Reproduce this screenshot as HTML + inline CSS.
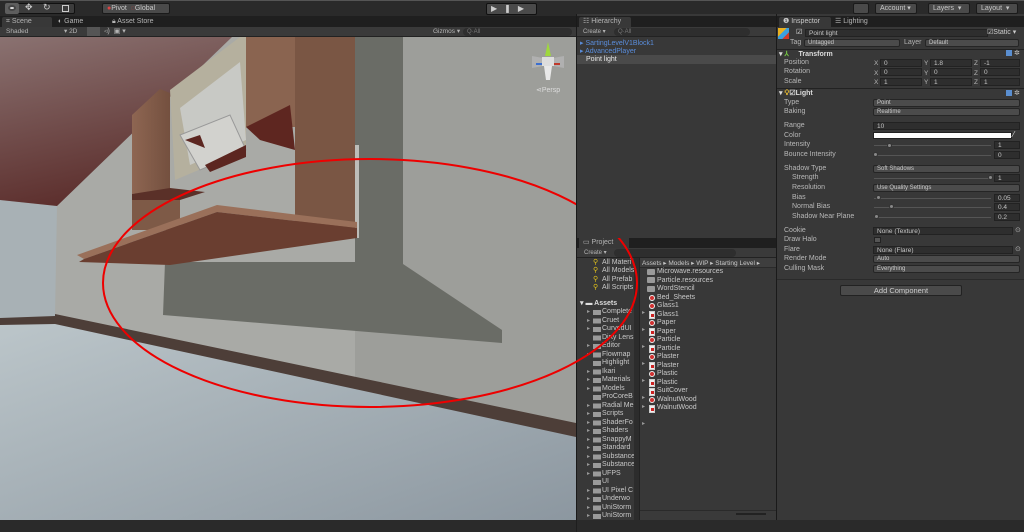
<!DOCTYPE html>
<html><head><meta charset="utf-8"><style>
*{margin:0;padding:0;box-sizing:border-box}
body{width:1024px;height:532px;overflow:hidden;background:#1e1e1e;font-family:"Liberation Sans",sans-serif;font-size:7px;color:#b4b4b4;position:relative}
.a{position:absolute;white-space:nowrap}
svg.a{display:block}
.btn{position:absolute;background:#4a4a4a;border:1px solid #1a1a1a;border-radius:2px;color:#c8c8c8;font-size:7px;line-height:8px;padding-left:4px}
.fld{position:absolute;background:#2e2e2e;border:1px solid #222;height:8px;color:#c4c4c4;font-size:6.5px;line-height:7px;padding-left:3px}
.dd{position:absolute;background:#4b4b4b;border:1px solid #252525;border-radius:2px;height:8px;color:#c8c8c8;font-size:6px;line-height:7px;padding-left:3px}
.lbl{position:absolute;left:784px;color:#b8b8b8;font-size:7px}
.sl{position:absolute;height:1px;background:#222;border-bottom:1px solid #555}
.kn{position:absolute;width:5px;height:5px;border-radius:50%;background:#888;border:1px solid #333}
.fo{position:absolute;width:8px;height:6px;background:#9a9a9a;border-radius:1px}
.mat{position:absolute;width:6px;height:6px;border-radius:50%;background:#d03030;border:1px solid #eee}
.pf{position:absolute;width:6px;height:8px;background:#eee;border:1px solid #ccc}
.pf:after{content:"";position:absolute;left:1px;top:2px;width:3px;height:3px;background:#c22}
</style></head><body>

<!-- top toolbar -->
<div class="a" style="left:0;top:0;width:1024px;height:16px;background:#2a2a2a;border-top:1px solid #555"></div>
<div class="a" style="left:5px;top:3px;width:70px;height:11px;background:#3c3c3c;border:1px solid #111;border-radius:2px"></div>
<div class="a" style="left:5px;top:3px;width:14px;height:11px;background:#5e5e5e;border-radius:2px"></div>
<div class="a" style="left:8px;top:5px;width:8px;height:6px;border-radius:50%;background:#ddd;border:2px solid #444"></div>
<div class="a" style="left:25px;top:2px;color:#ccc;font-size:9px">✥</div>
<div class="a" style="left:43px;top:2px;color:#ccc;font-size:9px">↻</div>
<div class="a" style="left:62px;top:5px;width:7px;height:7px;border:1px solid #ccc"></div>
<div class="btn" style="left:102px;top:3px;width:68px;height:11px;line-height:9px"><span style="color:#d44">●</span>Pivot &nbsp;<span style="color:#d44">◌</span>Global</div>
<div class="a" style="left:486px;top:3px;width:51px;height:12px;background:#4a4a4a;border:1px solid #111;border-radius:2px;color:#ccc;font-size:8px;line-height:10px;letter-spacing:7px;padding-left:4px">▶❚▶</div>
<div class="btn" style="left:853px;top:3px;width:16px;height:11px"></div>
<div class="btn" style="left:875px;top:3px;width:42px;height:11px;line-height:9px">Account ▾</div>
<div class="btn" style="left:928px;top:3px;width:42px;height:11px;line-height:9px">Layers &nbsp;▾</div>
<div class="btn" style="left:976px;top:3px;width:42px;height:11px;line-height:9px">Layout &nbsp;▾</div>

<!-- scene tabs -->
<div class="a" style="left:0;top:16px;width:576px;height:11px;background:#1f1f1f"></div>
<div class="a" style="left:2px;top:17px;width:50px;height:10px;background:#383838;border-radius:2px 2px 0 0;padding-left:4px;line-height:10px">⌗ Scene</div>
<div class="a" style="left:58px;top:17px;line-height:10px">◐ Game</div>
<div class="a" style="left:112px;top:17px;line-height:10px">🔒︎ Asset Store</div>
<div class="a" style="left:0;top:27px;width:576px;height:10px;background:#3a3a3a;border-bottom:1px solid #222"></div>
<div class="a" style="left:6px;top:28px;font-size:6.5px;line-height:8px">Shaded</div>
<div class="a" style="left:64px;top:28px;font-size:6.5px;line-height:8px">▾ 2D</div>
<div class="a" style="left:87px;top:27px;width:13px;height:9px;background:#555"></div>
<div class="a" style="left:104px;top:27px;font-size:7px;line-height:9px">◃) &nbsp;▣ ▾</div>
<div class="a" style="left:433px;top:28px;font-size:6.5px;line-height:8px">Gizmos ▾</div>
<div class="a" style="left:463px;top:28px;width:109px;height:8px;background:#2e2e2e;border-radius:4px;font-size:6px;line-height:8px;padding-left:4px;color:#777">Q·All</div>

<!-- scene view -->
<svg class="a" style="left:0;top:37px" width="576" height="483" viewBox="0 0 576 483" preserveAspectRatio="none">
<defs>
<linearGradient id="fl" x1="0" y1="0" x2="1" y2="1"><stop offset="0" stop-color="#bcc6ca"/><stop offset="1" stop-color="#8c97a0"/></linearGradient>
<linearGradient id="ce" x1="0" y1="0" x2="0.3" y2="1"><stop offset="0" stop-color="#8a7271"/><stop offset="1" stop-color="#5c2e2c"/></linearGradient>
<linearGradient id="wd" x1="0" y1="0" x2="1" y2="0"><stop offset="0" stop-color="#8e6652"/><stop offset="1" stop-color="#74503f"/></linearGradient>
</defs>
<g transform="translate(0,-37)">
<rect x="0" y="37" width="576" height="483" fill="#9d9e9a"/>
<polygon points="55,205 230,37 355,37 355,390 55,316" fill="#a9aaa6"/>
<polygon points="0,320 55,318 576,428 576,520 0,520" fill="url(#fl)"/>
<polygon points="0,316 55,314 576,423 576,437 55,324 0,325" fill="#4d3e38"/>
<polygon points="0,200 57,206 55,316 0,318" fill="#a8b1b5"/>
<polygon points="0,37 232,37 57,206 0,200" fill="url(#ce)"/>
<polygon points="355,37 403,37 403,264 502,330 502,343 163,315 165,262 355,262" fill="#6a6c66"/>
<!-- frame box -->
<polygon points="170,90 240,37 246,37 246,150 175,180" fill="#b5b09e"/>
<polygon points="180,108 240,62 246,140 190,165" fill="#c8c9c5"/>
<polygon points="180,135 230,115 246,150 200,170" fill="#d2d2ce" stroke="#999" stroke-width="1"/>
<polygon points="185,140 200,135 205,148" fill="#5c2620"/>
<polygon points="205,165 246,145 246,157 210,172" fill="#5c2620"/>
<!-- left cabinet -->
<polygon points="132,115 160,89 170,93 170,190 132,194" fill="url(#wd)"/>
<polygon points="132,194 170,188 205,192 180,200 132,200" fill="#5a3028"/>
<rect x="132" y="200" width="48" height="30" fill="#7e5a47"/>
<!-- right cabinet -->
<rect x="246" y="37" width="49" height="90" fill="#8a6450"/>
<polygon points="246,127 290,105 295,150 260,140" fill="#5e2620"/>
<rect x="295" y="37" width="60" height="200" fill="#7a5644"/>
<rect x="355" y="145" width="4" height="93" fill="#bdbdb9"/>
<!-- shelf -->
<polygon points="77,255 217,205 357,222 357,228 217,212 84,259" fill="#9a705a"/>
<polygon points="84,259 217,212 357,228 357,238 170,265 79,262" fill="#6a3e30"/>
<!-- gizmo -->
<polygon points="545,56 551,56 548,42" fill="#9fd83c"/>
<polygon points="544,66 552,66 550,80 546,80" fill="#e8e8e8"/>
<polygon points="543,58 543,66 532,68 532,56" fill="#b0b0b0"/>
<polygon points="553,58 553,66 564,68 564,56" fill="#b0b0b0"/>
<rect x="542" y="57" width="12" height="9" fill="#ddd"/>
<rect x="536" y="63" width="6" height="2" fill="#3b6fd0"/>
<rect x="554" y="63" width="6" height="2" fill="#c0392b"/>
<text x="536" y="92" font-family="Liberation Sans" font-size="7" fill="#ddd">⋖Persp</text>
</g>
</svg>
<div class="a" style="left:0;top:520px;width:576px;height:12px;background:#2a2a2a"></div>

<!-- hierarchy -->
<div class="a" style="left:577px;top:14px;width:199px;height:224px;background:#383838"></div>
<div class="a" style="left:577px;top:16px;width:199px;height:11px;background:#1f1f1f"></div>
<div class="a" style="left:579px;top:17px;width:52px;height:10px;background:#383838;border-radius:2px 2px 0 0;padding-left:4px;line-height:10px">☷ Hierarchy</div>
<div class="a" style="left:577px;top:27px;width:199px;height:10px;background:#3a3a3a;border-bottom:1px solid #222"></div>
<div class="a" style="left:583px;top:28px;font-size:6px;line-height:8px">Create ▾</div>
<div class="a" style="left:614px;top:28px;width:136px;height:8px;background:#2e2e2e;border-radius:4px;font-size:6px;line-height:8px;padding-left:4px;color:#777">Q·All</div>
<div class="a" style="left:580px;top:39px;color:#5a8ddb;font-size:7px">▸ SartingLevelV1Block1</div>
<div class="a" style="left:580px;top:47px;color:#5a8ddb;font-size:7px">▸ AdvancedPlayer</div>
<div class="a" style="left:577px;top:55px;width:199px;height:9px;background:#4a4a4a"></div>
<div class="a" style="left:586px;top:56px;color:#e6e6e6;font-size:7px">Point light</div>

<!-- project -->
<div class="a" style="left:577px;top:238px;width:199px;height:282px;background:#383838"></div>
<div class="a" style="left:577px;top:238px;width:199px;height:10px;background:#1f1f1f"></div>
<div class="a" style="left:579px;top:238px;width:50px;height:10px;background:#383838;padding-left:4px;line-height:10px">▭ Project</div>
<div class="a" style="left:577px;top:248px;width:199px;height:10px;background:#3a3a3a;border-bottom:1px solid #222"></div>
<div class="a" style="left:584px;top:249px;font-size:6px;line-height:8px">Create ▾</div>
<div class="a" style="left:614px;top:249px;width:122px;height:8px;background:#2e2e2e;border-radius:4px"></div>
<div class="a" style="left:639px;top:258px;width:1px;height:262px;background:#222"></div>
<div class="a" style="left:634px;top:258px;width:5px;height:262px;background:#2c2c2c"></div>
<div class="a" style="left:640px;top:258px;width:136px;height:10px;background:#3e3e3e;border-bottom:1px solid #2a2a2a"></div>
<div class="a" style="left:642px;top:259px;color:#c8c8c8;font-size:6.5px">Assets ▸ Models ▸ WIP ▸ Starting Level ▸</div>
<div class="a" style="left:640px;top:510px;width:136px;height:10px;background:#3a3a3a;border-top:1px solid #2a2a2a"></div>
<div class="a" style="left:736px;top:513px;width:30px;height:2px;background:#222"></div>

<div class="a" style="left:593px;top:259px;color:#e4c41a;font-size:7px;line-height:8.3px">⚲<br>⚲<br>⚲<br>⚲</div>
<div class="a" style="left:602px;top:259px;color:#c8c8c8;font-size:7px;line-height:8.3px">All Materi<br>All Models<br>All Prefab<br>All Scripts</div>
<div class="a" style="left:580px;top:299px;color:#ddd;font-size:7px;font-weight:bold">▾ ▬ Assets</div>
<div class="a" style="left:587px;top:308px;color:#999;font-size:6px;line-height:8.5px">▸<br>▸<br>▸<br>&nbsp;<br>▸<br>▸<br>&nbsp;<br>▸<br>▸<br>▸<br>&nbsp;<br>▸<br>▸<br>▸<br>▸<br>▸<br>▸<br>▸<br>▸<br>▸<br>&nbsp;<br>▸<br>▸<br>▸<br>▸</div>
<div class="a" style="left:593px;top:310px;width:8px;height:210px;background:repeating-linear-gradient(#9a9a9a 0 5px,transparent 5px 8.5px)"></div>
<div class="a" style="left:602px;top:308px;color:#c8c8c8;font-size:7px;line-height:8.5px;width:32px;overflow:hidden;height:212px">Complete<br>Cruet<br>CurvedUI<br>Dirty Lens<br>Editor<br>Flowmap<br>Highlight<br>Ikari<br>Materials<br>Models<br>ProCoreB<br>Radial Me<br>Scripts<br>ShaderFo<br>Shaders<br>SnappyM<br>Standard<br>Substance<br>Substance<br>UFPS<br>UI<br>UI Pixel C<br>Underwo<br>UniStorm<br>UniStorm</div>

<div class="fo" style="left:647px;top:269px"></div><div class="fo" style="left:647px;top:277px"></div><div class="fo" style="left:647px;top:286px"></div>
<div class="mat" style="left:649px;top:295px"></div><div class="mat" style="left:649px;top:303px"></div>
<div class="pf" style="left:649px;top:311px"></div><div class="mat" style="left:649px;top:320px"></div>
<div class="pf" style="left:649px;top:328px"></div><div class="mat" style="left:649px;top:337px"></div>
<div class="pf" style="left:649px;top:345px"></div><div class="mat" style="left:649px;top:354px"></div>
<div class="pf" style="left:649px;top:362px"></div><div class="mat" style="left:649px;top:371px"></div>
<div class="pf" style="left:649px;top:379px"></div><div class="pf" style="left:649px;top:388px"></div>
<div class="mat" style="left:649px;top:397px"></div><div class="pf" style="left:649px;top:405px"></div>
<div class="a" style="left:642px;top:309px;color:#999;font-size:6px;line-height:8.5px">▸<br>&nbsp;<br>▸<br>&nbsp;<br>▸<br>&nbsp;<br>▸<br>&nbsp;<br>▸<br>&nbsp;<br>▸<br>▸<br>&nbsp;<br>▸</div>
<div class="a" style="left:657px;top:268px;color:#c8c8c8;font-size:7px;line-height:8.5px">Microwave.resources<br>Particle.resources<br>WordStencil<br>Bed_Sheets<br>Glass1<br>Glass1<br>Paper<br>Paper<br>Particle<br>Particle<br>Plaster<br>Plaster<br>Plastic<br>Plastic<br>SuitCover<br>WalnutWood<br>WalnutWood</div>

<!-- inspector -->
<div class="a" style="left:777px;top:14px;width:247px;height:506px;background:#383838"></div>
<div class="a" style="left:777px;top:16px;width:247px;height:11px;background:#1f1f1f"></div>
<div class="a" style="left:779px;top:17px;width:52px;height:10px;background:#383838;border-radius:2px 2px 0 0;padding-left:4px;line-height:10px;color:#c8c8c8">❶ Inspector</div>
<div class="a" style="left:835px;top:17px;line-height:10px">☰ Lighting</div>
<div class="a" style="left:778px;top:28px;width:11px;height:11px;background:linear-gradient(135deg,#e8b020 0 40%,#3aa0e0 40% 70%,#d03a2a 70%)"></div>
<div class="a" style="left:796px;top:28px;color:#ddd;font-size:7px">☑</div>
<div class="fld" style="left:805px;top:29px;width:183px">Point light</div>
<div class="a" style="left:987px;top:28px;color:#ccc;font-size:7px">☑Static ▾</div>
<div class="a" style="left:790px;top:39px;font-size:7px">Tag</div>
<div class="dd" style="left:804px;top:39px;width:96px">Untagged</div>
<div class="a" style="left:904px;top:39px;font-size:7px">Layer</div>
<div class="dd" style="left:925px;top:39px;width:94px">Default</div>
<div class="a" style="left:777px;top:49px;width:247px;height:1px;background:#222"></div>
<div class="a" style="left:779px;top:50px;color:#ddd;font-size:7px;font-weight:bold">▾ <span style="color:#7c4">⅄</span> &nbsp;&nbsp;&nbsp;&nbsp;Transform</div>
<div class="a" style="left:1006px;top:50px;width:6px;height:6px;background:#5a8ed0"></div>
<div class="a" style="left:1014px;top:49px;color:#ccc;font-size:7px">✲</div>
<div class="lbl" style="top:59px">Position</div><div class="lbl" style="top:68px">Rotation</div><div class="lbl" style="top:78px">Scale</div>
<div class="a" style="left:874px;top:59px;font-size:6.5px;line-height:9.6px">X<br>X<br>X</div>
<div class="a" style="left:924px;top:59px;font-size:6.5px;line-height:9.6px">Y<br>Y<br>Y</div>
<div class="a" style="left:974px;top:59px;font-size:6.5px;line-height:9.6px">Z<br>Z<br>Z</div>
<div class="fld" style="left:880px;top:59px;width:42px">0</div><div class="fld" style="left:930px;top:59px;width:42px">1.8</div><div class="fld" style="left:980px;top:59px;width:40px">-1</div>
<div class="fld" style="left:880px;top:68px;width:42px">0</div><div class="fld" style="left:930px;top:68px;width:42px">0</div><div class="fld" style="left:980px;top:68px;width:40px">0</div>
<div class="fld" style="left:880px;top:78px;width:42px">1</div><div class="fld" style="left:930px;top:78px;width:42px">1</div><div class="fld" style="left:980px;top:78px;width:40px">1</div>
<div class="a" style="left:777px;top:88px;width:247px;height:1px;background:#222"></div>
<div class="a" style="left:779px;top:89px;color:#ddd;font-size:7px;font-weight:bold">▾ <span style="color:#f0c030">💡︎</span>☑Light</div>
<div class="a" style="left:1006px;top:90px;width:6px;height:6px;background:#5a8ed0"></div>
<div class="a" style="left:1014px;top:89px;color:#ccc;font-size:7px">✲</div>
<div class="lbl" style="top:99px">Type</div><div class="dd" style="left:873px;top:99px;width:147px">Point</div>
<div class="lbl" style="top:108px">Baking</div><div class="dd" style="left:873px;top:108px;width:147px">Realtime</div>
<div class="lbl" style="top:122px">Range</div><div class="fld" style="left:873px;top:122px;width:147px">10</div>
<div class="lbl" style="top:132px">Color</div><div class="a" style="left:873px;top:132px;width:139px;height:7px;background:#fff;border:1px solid #222"></div>
<div class="a" style="left:1013px;top:130px;color:#ddd;font-size:8px">⁄</div>
<div class="lbl" style="top:141px">Intensity</div><div class="sl" style="left:874px;top:145px;width:117px"></div><div class="kn" style="left:887px;top:143px"></div><div class="fld" style="left:994px;top:141px;width:26px">1</div>
<div class="lbl" style="top:151px">Bounce Intensity</div><div class="sl" style="left:874px;top:155px;width:117px"></div><div class="kn" style="left:873px;top:152px"></div><div class="fld" style="left:994px;top:151px;width:26px">0</div>
<div class="lbl" style="top:165px">Shadow Type</div><div class="dd" style="left:873px;top:165px;width:147px">Soft Shadows</div>
<div class="lbl" style="top:174px;left:792px">Strength</div><div class="sl" style="left:874px;top:178px;width:117px"></div><div class="kn" style="left:988px;top:175px"></div><div class="fld" style="left:994px;top:174px;width:26px">1</div>
<div class="lbl" style="top:184px;left:792px">Resolution</div><div class="dd" style="left:873px;top:184px;width:147px">Use Quality Settings</div>
<div class="lbl" style="top:194px;left:792px">Bias</div><div class="sl" style="left:874px;top:198px;width:117px"></div><div class="kn" style="left:876px;top:195px"></div><div class="fld" style="left:994px;top:194px;width:26px">0.05</div>
<div class="lbl" style="top:203px;left:792px">Normal Bias</div><div class="sl" style="left:874px;top:207px;width:117px"></div><div class="kn" style="left:889px;top:204px"></div><div class="fld" style="left:994px;top:203px;width:26px">0.4</div>
<div class="lbl" style="top:213px;left:792px">Shadow Near Plane</div><div class="sl" style="left:874px;top:217px;width:117px"></div><div class="kn" style="left:874px;top:214px"></div><div class="fld" style="left:994px;top:213px;width:26px">0.2</div>
<div class="lbl" style="top:227px">Cookie</div><div class="fld" style="left:873px;top:227px;width:140px">None (Texture)</div><div class="a" style="left:1015px;top:226px;font-size:7px">⊙</div>
<div class="lbl" style="top:236px">Draw Halo</div><div class="a" style="left:874px;top:237px;width:7px;height:6px;background:#555;border:1px solid #222"></div>
<div class="lbl" style="top:246px">Flare</div><div class="fld" style="left:873px;top:246px;width:140px">None (Flare)</div><div class="a" style="left:1015px;top:245px;font-size:7px">⊙</div>
<div class="lbl" style="top:255px">Render Mode</div><div class="dd" style="left:873px;top:255px;width:147px">Auto</div>
<div class="lbl" style="top:265px">Culling Mask</div><div class="dd" style="left:873px;top:265px;width:147px">Everything</div>
<div class="a" style="left:777px;top:279px;width:247px;height:1px;background:#2a2a2a"></div>
<div class="a" style="left:840px;top:285px;width:122px;height:11px;background:#4a4a4a;border:1px solid #222;border-radius:2px;color:#ccc;font-size:7.5px;line-height:9px;text-align:center">Add Component</div>
<div class="a" style="left:776px;top:14px;width:1px;height:506px;background:#1a1a1a"></div>
<div class="a" style="left:576px;top:14px;width:1px;height:506px;background:#1a1a1a"></div>
<div class="a" style="left:577px;top:520px;width:447px;height:12px;background:#2a2a2a"></div>

<!-- red ellipse -->
<svg class="a" style="left:0;top:0" width="1024" height="532" viewBox="0 0 1024 532">
<defs><clipPath id="cp"><path d="M0 37H576V520H0Z M576 238H776V520H576Z"/></clipPath></defs>
<ellipse cx="370" cy="283" rx="267" ry="124" fill="none" stroke="#e00" stroke-width="2" clip-path="url(#cp)"/>
</svg>
</body></html>
